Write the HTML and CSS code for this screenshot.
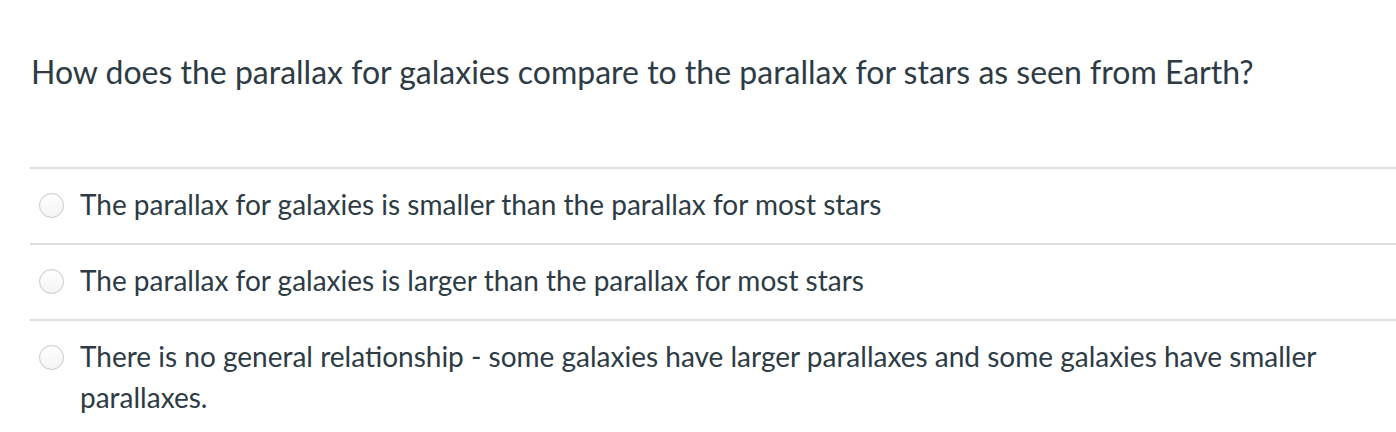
FILE: index.html
```html
<!DOCTYPE html>
<html>
<head>
<meta charset="utf-8">
<link rel="stylesheet" href="styles.css">
</head>
<body>
<div class="quiz">
  <div class="question">How does the parallax for galaxies compare to the parallax for stars as seen from Earth?</div>
  <div class="answers">
    <div class="answer"><span class="radio"></span><span class="label">The parallax for galaxies is smaller than the parallax for most stars</span></div>
    <div class="answer"><span class="radio"></span><span class="label">The parallax for galaxies is larger than the parallax for most stars</span></div>
    <div class="answer"><span class="radio"></span><span class="label">There is no general relationship - some galaxies have larger parallaxes and some galaxies have smaller parallaxes.</span></div>
  </div>
</div>
</body>
</html>
```
FILE: styles.css
```css
html, body {
  margin: 0;
  padding: 0;
  background: #fff;
}
body {
  font-family: Lato, "Open Sans", sans-serif;
  color: #2d3b45;
}
.quiz {
  padding-top: 48px;
}
.question {
  font-size: 32px;
  line-height: 48px;
  padding-left: 31px;
  margin-bottom: 71px;
}
.answers {
  margin-left: 30px;
}
.answer {
  display: flex;
  align-items: flex-start;
  border-top: 2px solid #dfdfdf;
  padding: 15px 0 18px 9px;
}
.radio {
  flex: none;
  width: 25px;
  height: 25px;
  border-radius: 50%;
  border: 1px solid #c8c8c8;
  background: linear-gradient(#ffffff, #f4f4f4);
  margin-top: 9px;
  margin-right: 16px;
  box-sizing: border-box;
}
.label {
  font-size: 28px;
  line-height: 41px;
  padding-right: 60px;
}
```
